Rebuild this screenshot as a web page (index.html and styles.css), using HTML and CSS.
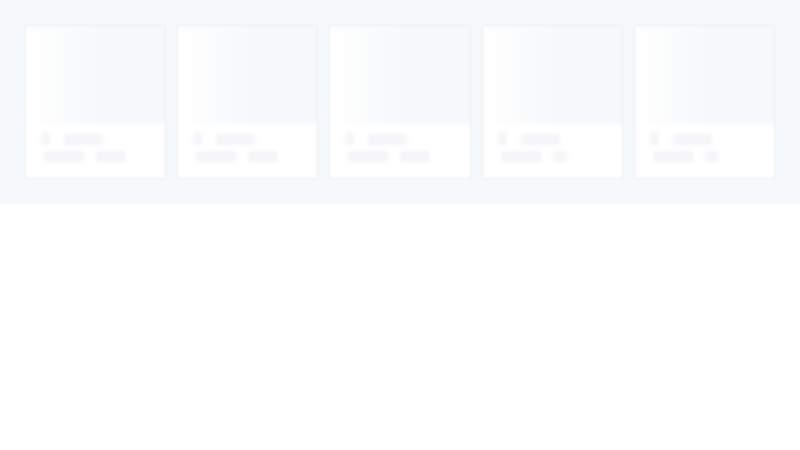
FILE: index.html
```html
<!DOCTYPE html>
<html>
<head>
<meta charset="utf-8">
<link rel="stylesheet" href="styles.css">
</head>
<body>
<section class="strip">
  <div class="card">
    <div class="thumb"></div>
    <div class="meta">
      <div class="row"><span class="sq"></span><span class="bar b1"></span></div>
      <div class="row r2"><span class="bar b2"></span><span class="bar b3"></span></div>
    </div>
  </div>
  <div class="card">
    <div class="thumb"></div>
    <div class="meta">
      <div class="row"><span class="sq"></span><span class="bar b1"></span></div>
      <div class="row r2"><span class="bar b2"></span><span class="bar b3"></span></div>
    </div>
  </div>
  <div class="card">
    <div class="thumb"></div>
    <div class="meta">
      <div class="row"><span class="sq"></span><span class="bar b1"></span></div>
      <div class="row r2"><span class="bar b2"></span><span class="bar b3"></span></div>
    </div>
  </div>
  <div class="card">
    <div class="thumb"></div>
    <div class="meta">
      <div class="row"><span class="sq"></span><span class="bar b1"></span></div>
      <div class="row r2"><span class="bar b2"></span><span class="bar b4"></span></div>
    </div>
  </div>
  <div class="card">
    <div class="thumb"></div>
    <div class="meta">
      <div class="row"><span class="sq"></span><span class="bar b1"></span></div>
      <div class="row r2"><span class="bar b2"></span><span class="bar b5"></span></div>
    </div>
  </div>
</section>
</body>
</html>
```
FILE: styles.css
```css
html, body {
  margin: 0;
  padding: 0;
  background: #ffffff;
  font-family: "Liberation Sans", Arial, sans-serif;
}
.strip {
  background: #f6f9fc;
  height: 204px;
  box-sizing: border-box;
  padding: 25px 25px 0 25px;
  display: grid;
  grid-template-columns: repeat(5, 1fr);
  column-gap: 11px;
  align-items: start;
}
.card {
  height: 154px;
  box-sizing: border-box;
  background: #ffffff;
  border: 1px solid #e6ebf0;
  border-radius: 2px;
  display: flex;
  flex-direction: column;
  filter: blur(0.9px);
}
.thumb {
  height: 98px;
  background: linear-gradient(90deg, #ffffff 0%, #fbfcfd 25%, #f6f8fa 55%, #f6f8fa 100%);
}
.meta {
  padding: 9px 0 0 15px;
  display: flex;
  flex-direction: column;
  gap: 5px;
}
.row {
  display: flex;
  align-items: center;
  gap: 14px;
  height: 12px;
}
.r2 {
  padding-left: 3px;
  gap: 12px;
}
.sq {
  width: 9px;
  height: 12px;
  background: #f4f6f9;
  filter: blur(0.8px);
}
.bar {
  height: 11px;
  background: #f4f6f9;
  filter: blur(0.8px);
}
.b1 { width: 39px; }
.b2 { width: 40px; }
.b3 { width: 29px; }
.b4 { width: 14px; }
.b5 { width: 13px; }
```
